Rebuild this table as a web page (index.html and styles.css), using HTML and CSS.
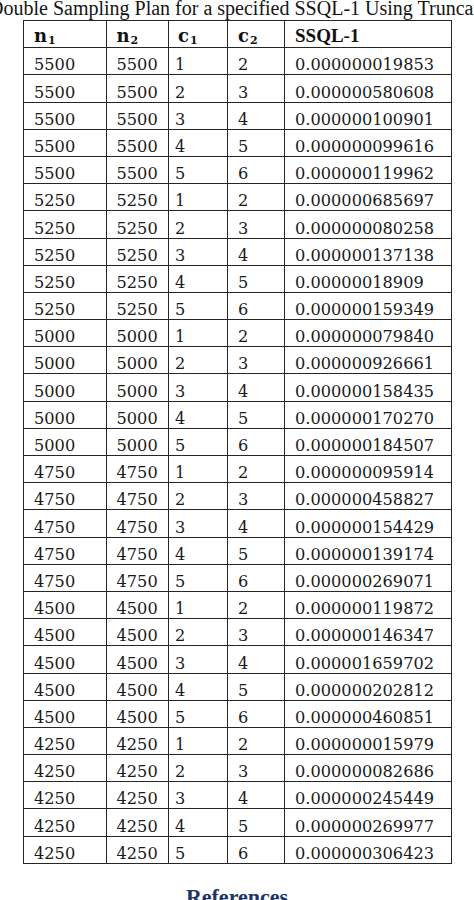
FILE: index.html
```html
<!DOCTYPE html>
<html lang="en">
<head>
<meta charset="utf-8">
<title>Double Sampling Plan</title>
<link rel="stylesheet" href="styles.css">
</head>
<body>
<div class="title"><span class="title-text">Double Sampling Plan for a specified SSQL-1 Using Truncated Life Tests</span></div>
<table class="plan">
  <colgroup>
    <col class="w-n1"><col class="w-n2"><col class="w-c1"><col class="w-c2"><col class="w-ssql">
  </colgroup>
  <thead>
    <tr class="row head">
      <th><span class="var">n</span><sub>1</sub></th>
      <th><span class="var">n</span><sub>2</sub></th>
      <th class="c1"><span class="var">c</span><sub>1</sub></th>
      <th><span class="var">c</span><sub>2</sub></th>
      <th class="ssql">SSQL-1</th>
    </tr>
  </thead>
  <tbody>
    <tr class="row"><td>5500</td><td>5500</td><td class="c1">1</td><td>2</td><td>0.000000019853</td></tr>
    <tr class="row"><td>5500</td><td>5500</td><td class="c1">2</td><td>3</td><td>0.000000580608</td></tr>
    <tr class="row"><td>5500</td><td>5500</td><td class="c1">3</td><td>4</td><td>0.000000100901</td></tr>
    <tr class="row"><td>5500</td><td>5500</td><td class="c1">4</td><td>5</td><td>0.000000099616</td></tr>
    <tr class="row"><td>5500</td><td>5500</td><td class="c1">5</td><td>6</td><td>0.000000119962</td></tr>
    <tr class="row"><td>5250</td><td>5250</td><td class="c1">1</td><td>2</td><td>0.000000685697</td></tr>
    <tr class="row"><td>5250</td><td>5250</td><td class="c1">2</td><td>3</td><td>0.000000080258</td></tr>
    <tr class="row"><td>5250</td><td>5250</td><td class="c1">3</td><td>4</td><td>0.000000137138</td></tr>
    <tr class="row"><td>5250</td><td>5250</td><td class="c1">4</td><td>5</td><td>0.00000018909</td></tr>
    <tr class="row"><td>5250</td><td>5250</td><td class="c1">5</td><td>6</td><td>0.000000159349</td></tr>
    <tr class="row"><td>5000</td><td>5000</td><td class="c1">1</td><td>2</td><td>0.000000079840</td></tr>
    <tr class="row"><td>5000</td><td>5000</td><td class="c1">2</td><td>3</td><td>0.000000926661</td></tr>
    <tr class="row"><td>5000</td><td>5000</td><td class="c1">3</td><td>4</td><td>0.000000158435</td></tr>
    <tr class="row"><td>5000</td><td>5000</td><td class="c1">4</td><td>5</td><td>0.000000170270</td></tr>
    <tr class="row"><td>5000</td><td>5000</td><td class="c1">5</td><td>6</td><td>0.000000184507</td></tr>
    <tr class="row"><td>4750</td><td>4750</td><td class="c1">1</td><td>2</td><td>0.000000095914</td></tr>
    <tr class="row"><td>4750</td><td>4750</td><td class="c1">2</td><td>3</td><td>0.000000458827</td></tr>
    <tr class="row"><td>4750</td><td>4750</td><td class="c1">3</td><td>4</td><td>0.000000154429</td></tr>
    <tr class="row"><td>4750</td><td>4750</td><td class="c1">4</td><td>5</td><td>0.000000139174</td></tr>
    <tr class="row"><td>4750</td><td>4750</td><td class="c1">5</td><td>6</td><td>0.000000269071</td></tr>
    <tr class="row"><td>4500</td><td>4500</td><td class="c1">1</td><td>2</td><td>0.000000119872</td></tr>
    <tr class="row"><td>4500</td><td>4500</td><td class="c1">2</td><td>3</td><td>0.000000146347</td></tr>
    <tr class="row"><td>4500</td><td>4500</td><td class="c1">3</td><td>4</td><td>0.000001659702</td></tr>
    <tr class="row"><td>4500</td><td>4500</td><td class="c1">4</td><td>5</td><td>0.000000202812</td></tr>
    <tr class="row"><td>4500</td><td>4500</td><td class="c1">5</td><td>6</td><td>0.000000460851</td></tr>
    <tr class="row"><td>4250</td><td>4250</td><td class="c1">1</td><td>2</td><td>0.000000015979</td></tr>
    <tr class="row"><td>4250</td><td>4250</td><td class="c1">2</td><td>3</td><td>0.000000082686</td></tr>
    <tr class="row"><td>4250</td><td>4250</td><td class="c1">3</td><td>4</td><td>0.000000245449</td></tr>
    <tr class="row"><td>4250</td><td>4250</td><td class="c1">4</td><td>5</td><td>0.000000269977</td></tr>
    <tr class="row"><td>4250</td><td>4250</td><td class="c1">5</td><td>6</td><td>0.000000306423</td></tr>
  </tbody>
</table>
<h2 class="refs">References</h2>
</body>
</html>
```
FILE: styles.css
```css
html, body {
  margin: 0;
  padding: 0;
  background: #ffffff;
}
body {
  width: 474px;
  height: 900px;
  overflow: hidden;
  color: #111111;
  font-family: "Liberation Serif", "DejaVu Serif", serif;
}
.title {
  height: 20px;
  overflow: hidden;
  white-space: nowrap;
  font-size: 20px;
  line-height: 17px;
  color: #151515;
}
.title-text {
  display: inline-block;
  margin-left: -11px;
}
.plan {
  margin-left: 23px;
  width: 428px;
  border-collapse: collapse;
  table-layout: fixed;
}
.w-n1 { width: 82.5px; }
.w-n2 { width: 62.5px; }
.w-c1 { width: 59px; }
.w-c2 { width: 57px; }
.w-ssql { width: 167px; }
.row {
  height: 27.2px;
}
.plan th,
.plan td {
  border: 1px solid #262626;
  padding: 0 0 0 10px;
  text-align: left;
  vertical-align: bottom;
  white-space: nowrap;
  overflow: hidden;
}
.plan td {
  font-family: "DejaVu Serif", serif;
  font-size: 16.2px;
  line-height: 18px;
  font-weight: normal;
  color: #1a1a1a;
}
.plan td.c1 {
  padding-left: 6px;
}
.plan th {
  font-family: "Liberation Serif", serif;
  font-weight: bold;
  font-size: 19px;
  line-height: 22px;
  color: #111111;
}
.plan th.c1 {
  padding-left: 9px;
}
.var {
  font-family: "DejaVu Serif", serif;
  font-size: 18px;
  font-weight: bold;
}
.plan sub {
  font-size: 11px;
  vertical-align: -2px;
  line-height: 0;
  font-family: "DejaVu Serif", serif;
  font-weight: bold;
  margin-left: 1px;
}
.refs {
  margin: 20px 0 0;
  text-align: center;
  font-family: "Liberation Serif", serif;
  font-weight: bold;
  font-size: 22px;
  line-height: 26px;
  color: #1f3563;
}
```
